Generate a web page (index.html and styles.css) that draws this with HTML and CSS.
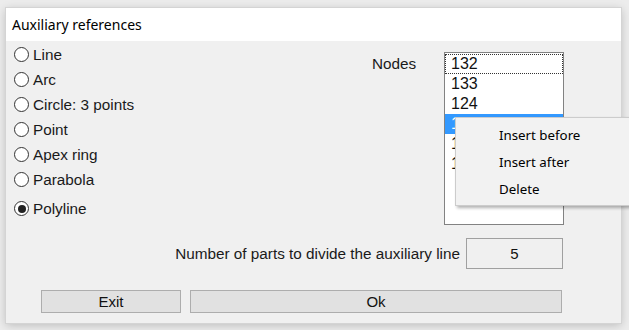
FILE: index.html
```html
<!DOCTYPE html>
<html>
<head>
<meta charset="utf-8">
<link rel="stylesheet" href="styles.css">
</head>
<body>
<div class="window">
  <div class="titlebar">Auxiliary references</div>
  <div class="content">
    <div class="top">
      <div class="radios">
        <div class="radio"><span class="dot"></span><span>Line</span></div>
        <div class="radio"><span class="dot"></span><span>Arc</span></div>
        <div class="radio"><span class="dot"></span><span>Circle: 3 points</span></div>
        <div class="radio"><span class="dot"></span><span>Point</span></div>
        <div class="radio"><span class="dot"></span><span>Apex ring</span></div>
        <div class="radio"><span class="dot"></span><span>Parabola</span></div>
        <div class="radio last"><span class="dot checked"></span><span>Polyline</span></div>
      </div>
      <div class="nodes">
        <div class="nodes-label">Nodes</div>
        <div class="listbox">
          <div class="item focus">132</div>
          <div class="item">133</div>
          <div class="item">124</div>
          <div class="item selected">125</div>
          <div class="item">126</div>
          <div class="item">127</div>
        </div>
      </div>
    </div>
    <div class="parts-row">
      <span class="parts-label">Number of parts to divide the auxiliary line</span>
      <div class="parts-input">5</div>
    </div>
    <div class="buttons">
      <div class="btn exit">Exit</div>
      <div class="btn ok">Ok</div>
    </div>
  </div>
  <div class="menu">
    <div class="menu-item">Insert before</div>
    <div class="menu-item">Insert after</div>
    <div class="menu-item">Delete</div>
  </div>
</div>
</body>
</html>
```

FILE: styles.css
```css
html, body {
  margin: 0;
  padding: 0;
}
body {
  background: #ececec;
  width: 629px;
  height: 330px;
  overflow: hidden;
  font-family: "Liberation Sans", Arial, sans-serif;
  color: #111;
}
.window {
  position: relative;
  margin: 8px 0 0 6px;
  width: 615px;
  height: 315px;
  background: #f0f0f0;
  box-shadow: 0 0 0 1px #d4d4d4, 0 2px 9px rgba(0, 0, 0, 0.22);
}
.titlebar {
  height: 33px;
  line-height: 33px;
  background: #fff;
  padding-left: 6px;
  font-family: "Noto Sans", "Open Sans", sans-serif;
  font-size: 14px;
  color: #000;
}
.content {
  padding-left: 8px;
}
.top {
  display: flex;
  height: 186px;
}
.radios {
  width: 358px;
  display: flex;
  flex-direction: column;
  padding-top: 1px;
}
.radio {
  height: 25px;
  display: flex;
  align-items: center;
  gap: 4px;
  font-size: 15.3px;
  color: #1a1a1a;
}
.radio.last {
  margin-top: 4px;
}
.dot {
  width: 13px;
  height: 13px;
  border: 1px solid #333;
  border-radius: 50%;
  background: #fff;
  display: flex;
  align-items: center;
  justify-content: center;
}
.dot.checked::after {
  content: "";
  width: 8px;
  height: 8px;
  border-radius: 50%;
  background: #222;
}
.nodes {
  display: flex;
  align-items: flex-start;
  padding-top: 11px;
}
.nodes-label {
  width: 72px;
  margin-top: 3px;
  font-size: 15.3px;
  color: #1a1a1a;
}
.listbox {
  width: 118px;
  height: 170px;
  border: 1px solid #828282;
  background: #fff;
  padding-top: 1px;
  box-sizing: content-box;
}
.item {
  height: 20px;
  line-height: 20px;
  padding-left: 6px;
  font-size: 16px;
  color: #111;
  box-sizing: border-box;
}
.item.focus {
  outline: 1px dotted #333;
  outline-offset: -1px;
}
.item.selected {
  background: #3399ff;
  color: #fff;
}
.parts-row {
  display: flex;
  justify-content: flex-end;
  align-items: center;
  gap: 6px;
  padding-right: 58px;
  margin-top: 11px;
}
.parts-label {
  font-size: 15.3px;
  color: #1a1a1a;
}
.parts-input {
  width: 95px;
  height: 29px;
  border: 1px solid #a0a0a0;
  background: #f0f0f0;
  display: flex;
  align-items: center;
  justify-content: center;
  font-size: 15px;
}
.buttons {
  display: flex;
  gap: 9px;
  margin-top: 21px;
  padding-left: 27px;
}
.btn {
  height: 21px;
  border: 1px solid #adadad;
  background: #e1e1e1;
  display: flex;
  align-items: center;
  justify-content: center;
  font-size: 15px;
  color: #111;
}
.btn.exit {
  width: 138px;
}
.btn.ok {
  width: 370px;
}
.menu {
  position: absolute;
  left: 449px;
  top: 109px;
  width: 176px;
  height: 83px;
  padding-top: 4px;
  background: #f2f2f2;
  border: 1px solid #cccccc;
  box-shadow: 2px 2px 3px rgba(0, 0, 0, 0.3);
  font-family: "Noto Sans", "Open Sans", sans-serif;
  font-size: 13.3px;
  color: #000;
}
.menu-item {
  height: 27px;
  line-height: 27px;
  padding-left: 43px;
}
```
